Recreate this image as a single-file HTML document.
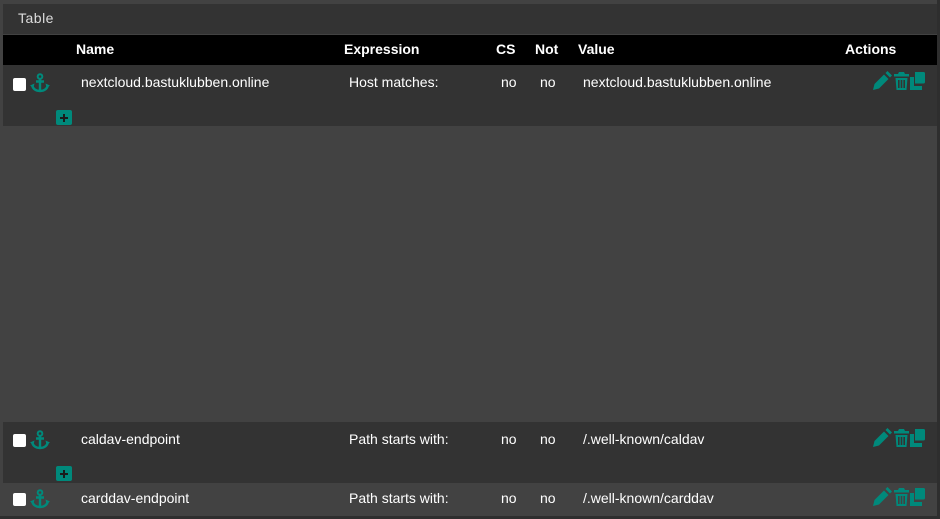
<!DOCTYPE html>
<html><head><meta charset="utf-8"><style>
*{margin:0;padding:0;box-sizing:border-box}
body{width:940px;height:519px;background:#424242;font-family:"Liberation Sans",sans-serif;color:#fff;position:relative;overflow:hidden;font-size:14px}
.abs{position:absolute}
.cb{position:absolute;width:13px;height:13px;background:#fff;border-radius:2px}
.t{position:absolute;font-size:14px;color:#fff}
.h{position:absolute;font-size:14px;font-weight:bold;color:#fff;top:41px}
.plus{position:absolute;width:16px;height:15px;background:#00897b;border-radius:2px}
.plus:before{content:"";position:absolute;left:4px;top:6.5px;width:8px;height:2px;background:#1b1b1b}
.plus:after{content:"";position:absolute;left:7px;top:3.5px;width:2px;height:8px;background:#1b1b1b}
</style></head><body>
<div class="abs" style="left:3px;top:4px;width:934px;height:30px;background:#333"></div>
<div class="t" style="left:18px;top:10px;color:#ddd;letter-spacing:.5px">Table</div>
<div class="abs" style="left:3px;top:35px;width:934px;height:30px;background:#000"></div>
<div class="h" style="left:76px">Name</div>
<div class="h" style="left:344px">Expression</div>
<div class="h" style="left:496px">CS</div>
<div class="h" style="left:535px">Not</div>
<div class="h" style="left:578px">Value</div>
<div class="h" style="left:845px">Actions</div>
<div class="abs" style="left:3px;top:65px;width:934px;height:61px;background:#333"></div>
<div class="abs" style="left:3px;top:422px;width:934px;height:61px;background:#333"></div>
<div class="abs" style="left:937px;top:0;width:3px;height:519px;background:#2e2e2e"></div>
<div class="abs" style="left:0;top:516px;width:940px;height:3px;background:#2e2e2e"></div>

<svg width="0" height="0" style="position:absolute"><defs>
<g id="anc"><circle cx="10" cy="3.5" r="2.3" fill="none" stroke="#00897b" stroke-width="2"/><path d="M10 6v12M6 8.5h8M2 12c1 4 4 6 8 6s7-2 8-6" fill="none" stroke="#00897b" stroke-width="2.4"/><path d="M0 12.5l4.5-2-1 4zM20 12.5l-4.5-2 1 4z" fill="#00897b"/></g>
<g id="act" fill="#00897b"><path d="M0 19l1.5-6 9.5-9.5 4.5 4.5-9.5 9.5zM12.5 2l2-2 4.5 4.5-2 2z"/><path d="M21 3h4l1-2h5l1 2h4v2.5H21zM22.5 7h12l-1 12h-10zM25 9v8h1.6V9zM27.7 9v8h1.6V9zM30.4 9v8h1.6V9z" fill-rule="evenodd"/><path d="M42 1h8.5a1.5 1.5 0 0 1 1.5 1.5V11a1.5 1.5 0 0 1-1.5 1.5H42z"/><path d="M37 6h4v9h8v4H37z"/></g>
</defs></svg>

<div class="cb" style="left:13px;top:78px"></div>
<svg class="abs" style="left:30px;top:73px" width="21" height="21"><use href="#anc"/></svg>
<div class="plus" style="left:56px;top:110px"></div>
<div class="t" style="left:81px;top:74px">nextcloud.bastuklubben.online</div>
<div class="t" style="left:349px;top:74px">Host matches:</div>
<div class="t" style="left:501px;top:74px">no</div>
<div class="t" style="left:540px;top:74px">no</div>
<div class="t" style="left:583px;top:74px">nextcloud.bastuklubben.online</div>
<svg class="abs" style="left:873px;top:71px" width="60" height="21"><use href="#act"/></svg>

<div class="cb" style="left:13px;top:434px"></div>
<svg class="abs" style="left:30px;top:430px" width="21" height="21"><use href="#anc"/></svg>
<div class="plus" style="left:56px;top:466px"></div>
<div class="t" style="left:81px;top:431px">caldav-endpoint</div>
<div class="t" style="left:349px;top:431px">Path starts with:</div>
<div class="t" style="left:501px;top:431px">no</div>
<div class="t" style="left:540px;top:431px">no</div>
<div class="t" style="left:583px;top:431px">/.well-known/caldav</div>
<svg class="abs" style="left:873px;top:428px" width="60" height="21"><use href="#act"/></svg>

<div class="cb" style="left:13px;top:493px"></div>
<svg class="abs" style="left:30px;top:489px" width="21" height="21"><use href="#anc"/></svg>
<div class="t" style="left:81px;top:490px">carddav-endpoint</div>
<div class="t" style="left:349px;top:490px">Path starts with:</div>
<div class="t" style="left:501px;top:490px">no</div>
<div class="t" style="left:540px;top:490px">no</div>
<div class="t" style="left:583px;top:490px">/.well-known/carddav</div>
<svg class="abs" style="left:873px;top:487px" width="60" height="21"><use href="#act"/></svg>
</body></html>
